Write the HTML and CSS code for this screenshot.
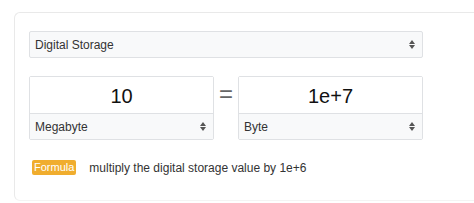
FILE: index.html
```html
<!DOCTYPE html>
<html lang="en">

<head>
    <meta charset="UTF-8">
    <meta name="viewport" content="width=device-width, initial-scale=1.0">
    <title>Digital Storage Converter</title>
    <link rel="stylesheet" href="styles.css">
</head>

<body>
    <div class="card">
        <div class="select category">
            <span>Digital Storage</span>
            <span class="arrows"></span>
        </div>
        <div class="converter">
            <div class="unit-box">
                <div class="value">10</div>
                <div class="select unit">
                    <span>Megabyte</span>
                    <span class="arrows"></span>
                </div>
            </div>
            <div class="equals">=</div>
            <div class="unit-box">
                <div class="value">1e+7</div>
                <div class="select unit">
                    <span>Byte</span>
                    <span class="arrows"></span>
                </div>
            </div>
        </div>
        <div class="formula">
            <span class="badge">Formula</span>
            <span class="formula-text">multiply the digital storage value by 1e+6</span>
        </div>
    </div>
</body>

</html>
```

FILE: styles.css
```css
body {
    margin: 0;
    font-family: "Liberation Sans", Arial, sans-serif;
    background-color: #fff;
    overflow: hidden;
}

.card {
    margin: 12px 0 0 14px;
    width: 460px;
    height: 189px;
    box-sizing: border-box;
    padding: 18px 0 0 14px;
    border: 1px solid #e9e9e9;
    border-right: none;
    border-bottom-color: #f4f4f4;
    border-radius: 6px 0 0 6px;
}

.select {
    display: flex;
    justify-content: space-between;
    align-items: center;
    box-sizing: border-box;
    background: #f8f9fa;
    border: 1px solid #dfe1e4;
    color: #333;
    font-size: 12px;
    padding: 0 9px 0 5px;
}

.category {
    width: 394px;
    height: 27px;
    border-radius: 2px;
}

.arrows {
    width: 0;
    height: 9px;
    position: relative;
}

.arrows::before,
.arrows::after {
    content: "";
    position: absolute;
    left: -4px;
    border-left: 3.5px solid transparent;
    border-right: 3.5px solid transparent;
}

.arrows::before {
    top: 0;
    border-bottom: 4px solid #555;
}

.arrows::after {
    bottom: 0;
    border-top: 4px solid #555;
}

.converter {
    display: flex;
    align-items: flex-start;
    margin-top: 18px;
    width: 394px;
}

.unit-box {
    width: 185px;
    height: 64px;
    box-sizing: border-box;
    border: 1px solid #dfe1e4;
    border-radius: 2px;
    display: flex;
    flex-direction: column;
}

.value {
    height: 36px;
    line-height: 38px;
    text-align: center;
    font-size: 20px;
    color: #111;
    background: #fff;
}

.unit {
    flex: 1;
    border: none;
    border-top: 1px solid #dfe1e4;
}

.equals {
    width: 24px;
    text-align: center;
    font-size: 24px;
    color: #666;
    line-height: 36px;
}

.formula {
    display: flex;
    align-items: center;
    margin-top: 20px;
    margin-left: 3px;
    font-size: 12px;
}

.badge {
    background: #f0ad2e;
    color: #fff;
    font-size: 11px;
    padding: 0 2px;
    height: 15px;
    line-height: 15px;
    border-radius: 2px;
}

.formula-text {
    margin-left: 13px;
    color: #333;
}
```
